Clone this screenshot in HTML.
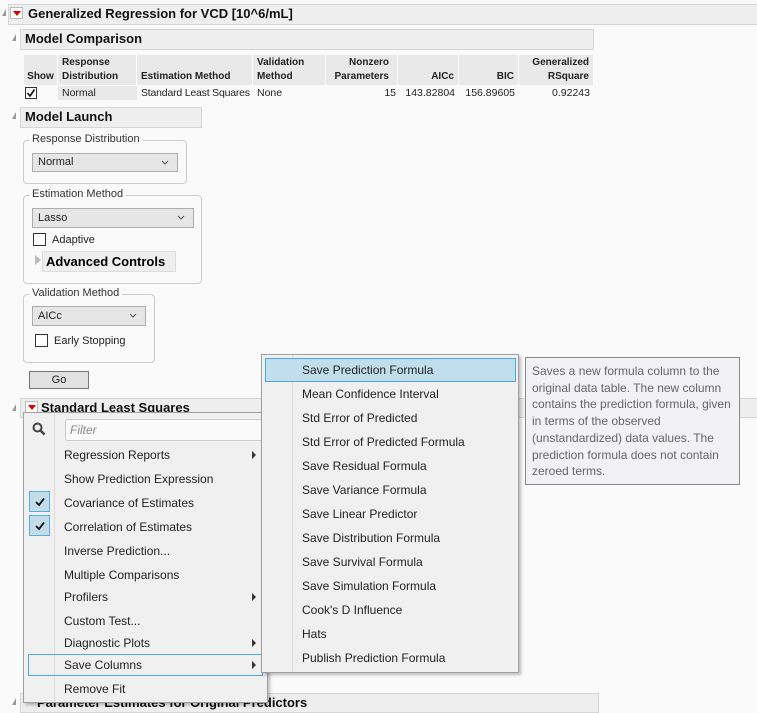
<!DOCTYPE html>
<html><head><style>
*{box-sizing:border-box;margin:0;padding:0}
body{width:757px;height:706px;background:#fafafa;position:relative;overflow:hidden;font-family:"Liberation Sans",sans-serif;font-size:11px;color:#222}
.a{position:absolute;white-space:nowrap}
.hdr{position:absolute;background:#eeeeee;border:1px solid #d6d6d6;font-weight:bold;font-size:13px;color:#111;padding-left:4px;line-height:18px}
.tri{position:absolute;width:0;height:0;border-left:4px solid transparent;border-bottom:7px solid #999}
.red{position:absolute;width:13px;height:12px;background:#fff;border:1px solid #bbb}
.red:after{content:"";position:absolute;left:2px;top:3px;border-left:4px solid transparent;border-right:4px solid transparent;border-top:5px solid #d00}
.th{position:absolute;top:55px;height:30px;background:#e9e9e9;font-weight:bold;font-size:10px;line-height:14px;padding-top:1px;border-right:1px solid #fff}
.td{position:absolute;top:86px;font-size:10.5px;line-height:14px}
.grp{position:absolute;border:1px solid #ccc;border-radius:4px}
.glab{position:absolute;background:#fafafa;padding:0 3px;font-size:11px;color:#333}
.dd{position:absolute;background:#e6e6e6;border:1px solid #adadad;font-size:11px;padding-left:5px}
.dd svg{position:absolute;right:8px;top:6px}
.cb{position:absolute;width:13px;height:13px;border:1px solid #333;background:#fff}
.menu{position:absolute;background:#f0f0f0;border:1px solid #a0a0a0;box-shadow:2px 2px 3px rgba(0,0,0,.25)}
.mi{position:absolute;font-size:12px;color:#222}
.arr{position:absolute;border-top:4px solid transparent;border-bottom:4px solid transparent;border-left:4px solid #333}
</style></head><body>
<div class="tri" style="left:2px;top:9px"></div>
<div class="hdr" style="left:8px;top:4px;width:760px;height:21px;padding-left:19px">Generalized Regression for VCD [10^6/mL]</div>
<div class="red" style="left:10px;top:7px"></div>
<div class="tri" style="left:12px;top:34px"></div>
<div class="hdr" style="left:20px;top:29px;width:574px;height:21px">Model Comparison</div>
<div class="th" style="left:24px;width:34px;padding-top:15px;text-align:center">Show</div>
<div class="th" style="left:58px;width:79px;padding-left:4px">Response<br>Distribution</div>
<div class="th" style="left:137px;width:116px;padding-left:4px;padding-top:15px">Estimation Method</div>
<div class="th" style="left:253px;width:73px;padding-left:4px">Validation<br>Method</div>
<div class="th" style="left:326px;width:72px;text-align:right;padding-right:8px">Nonzero<br>Parameters</div>
<div class="th" style="left:398px;width:61px;text-align:right;padding-right:4px;padding-top:15px">AICc</div>
<div class="th" style="left:459px;width:60px;text-align:right;padding-right:4px;padding-top:15px">BIC</div>
<div class="th" style="left:519px;width:75px;text-align:right;padding-right:4px">Generalized<br>RSquare</div>
<div class="cb" style="left:25px;top:87px;width:12px;height:12px"></div>
<svg class="a" style="left:26px;top:88px" width="10" height="10" viewBox="0 0 10 10"><path d="M1.5 5 L4 8 L8.5 1.5" fill="none" stroke="#111" stroke-width="1.6"/></svg>
<div class="td" style="left:58px;width:79px;height:14px;background:#e9e9e9;padding-left:4px">Normal</div>
<div class="td" style="left:141px;letter-spacing:-0.2px">Standard Least Squares</div>
<div class="td" style="left:257px">None</div>
<div class="td" style="left:326px;width:72px;text-align:right;padding-right:2px">15</div>
<div class="td" style="left:398px;width:61px;text-align:right;padding-right:4px">143.82804</div>
<div class="td" style="left:459px;width:60px;text-align:right;padding-right:4px">156.89605</div>
<div class="td" style="left:519px;width:75px;text-align:right;padding-right:4px">0.92243</div>
<div class="tri" style="left:12px;top:112px"></div>
<div class="hdr" style="left:20px;top:107px;width:182px;height:21px">Model Launch</div>
<div class="grp" style="left:23px;top:140px;width:164px;height:44px"></div>
<div class="glab" style="left:29px;top:133px">Response Distribution</div>
<div class="dd" style="left:32px;top:153px;width:146px;height:19px;line-height:17px">Normal<svg width="8" height="5"><path d="M1 1 L4 4 L7 1" fill="none" stroke="#555"/></svg></div>
<div class="grp" style="left:23px;top:195px;width:179px;height:89px"></div>
<div class="glab" style="left:29px;top:188px">Estimation Method</div>
<div class="dd" style="left:32px;top:208px;width:162px;height:20px;line-height:18px">Lasso<svg width="8" height="5"><path d="M1 1 L4 4 L7 1" fill="none" stroke="#555"/></svg></div>
<div class="cb" style="left:33px;top:233px"></div>
<div class="a" style="left:52px;top:234px">Adaptive</div>
<div class="a" style="left:35px;top:255px;border-top:5px solid transparent;border-bottom:5px solid transparent;border-left:6px solid #bbb"></div>
<div class="a" style="left:42px;top:251px;width:134px;height:21px;background:#eee;border:1px solid #ddd;font-weight:bold;font-size:13px;line-height:19px;padding-left:3px;color:#000">Advanced Controls</div>
<div class="grp" style="left:23px;top:294px;width:132px;height:69px"></div>
<div class="glab" style="left:29px;top:287px">Validation Method</div>
<div class="dd" style="left:32px;top:306px;width:114px;height:20px;line-height:18px">AICc<svg width="8" height="5"><path d="M1 1 L4 4 L7 1" fill="none" stroke="#555"/></svg></div>
<div class="cb" style="left:35px;top:334px"></div>
<div class="a" style="left:54px;top:335px">Early Stopping</div>
<div class="a" style="left:29px;top:371px;width:60px;height:18px;background:#e1e1e1;border:1px solid #777;text-align:center;line-height:16px">Go</div>
<div class="tri" style="left:12px;top:404px"></div>
<div class="hdr" style="left:20px;top:398px;width:740px;height:20px;padding-left:20px">Standard Least Squares</div>
<div class="red" style="left:25px;top:401px"></div>
<div class="tri" style="left:12px;top:698px"></div>
<div class="hdr" style="left:20px;top:693px;width:579px;height:20px;padding-left:16px">Parameter Estimates for Original Predictors</div>
<div class="menu" style="left:23px;top:412px;width:245px;height:291px">
 <div class="a" style="left:30px;top:0;width:1px;height:289px;background:#ddd"></div>
 <div class="a" style="left:41px;top:6px;width:198px;height:22px;background:#fafafa;border:1px solid #ccc;border-radius:3px;font-style:italic;color:#888;font-size:12px;padding-left:4px;line-height:20px">Filter</div>
 <svg class="a" style="left:8px;top:9px" width="14" height="14" viewBox="0 0 14 14"><circle cx="5.5" cy="5.5" r="4" fill="none" stroke="#444" stroke-width="2"/><path d="M8.5 8.5 L12.5 12.5" stroke="#444" stroke-width="2.5"/></svg>
 <div class="a" style="left:5px;top:78px;width:21px;height:21px;background:#c3dcea;border:1px solid #5aaedb"><svg style="position:absolute;left:5px;top:5px" width="10" height="10" viewBox="0 0 10 10"><path d="M1 5 L4 8 L9 1.5" fill="none" stroke="#111" stroke-width="1.8"/></svg></div>
 <div class="a" style="left:5px;top:102px;width:21px;height:21px;background:#c3dcea;border:1px solid #5aaedb"><svg style="position:absolute;left:5px;top:5px" width="10" height="10" viewBox="0 0 10 10"><path d="M1 5 L4 8 L9 1.5" fill="none" stroke="#111" stroke-width="1.8"/></svg></div>
 <div class="a" style="left:4px;top:241px;width:235px;height:22px;border:1px solid #4aa8dc"></div>
 <div class="mi" style="left:40px;top:35px">Regression Reports</div><div class="arr" style="left:228px;top:38px"></div>
 <div class="mi" style="left:40px;top:59px">Show Prediction Expression</div>
 <div class="mi" style="left:40px;top:83px">Covariance of Estimates</div>
 <div class="mi" style="left:40px;top:107px">Correlation of Estimates</div>
 <div class="mi" style="left:40px;top:131px">Inverse Prediction...</div>
 <div class="mi" style="left:40px;top:155px">Multiple Comparisons</div>
 <div class="mi" style="left:40px;top:177px">Profilers</div><div class="arr" style="left:228px;top:180px"></div>
 <div class="mi" style="left:40px;top:201px">Custom Test...</div>
 <div class="mi" style="left:40px;top:223px">Diagnostic Plots</div><div class="arr" style="left:228px;top:226px"></div>
 <div class="mi" style="left:40px;top:245px">Save Columns</div><div class="arr" style="left:228px;top:248px"></div>
 <div class="mi" style="left:40px;top:269px">Remove Fit</div>
</div>
<div class="menu" style="left:261px;top:354px;width:258px;height:319px">
 <div class="a" style="left:30px;top:0;width:1px;height:317px;background:#ddd"></div>
 <div class="a" style="left:3px;top:3px;width:251px;height:24px;background:#c0deec;border:1px solid #4aa8dc"></div>
 <div class="mi" style="left:40px;top:8px">Save Prediction Formula</div>
 <div class="mi" style="left:40px;top:32px">Mean Confidence Interval</div>
 <div class="mi" style="left:40px;top:56px">Std Error of Predicted</div>
 <div class="mi" style="left:40px;top:80px">Std Error of Predicted Formula</div>
 <div class="mi" style="left:40px;top:104px">Save Residual Formula</div>
 <div class="mi" style="left:40px;top:128px">Save Variance Formula</div>
 <div class="mi" style="left:40px;top:152px">Save Linear Predictor</div>
 <div class="mi" style="left:40px;top:176px">Save Distribution Formula</div>
 <div class="mi" style="left:40px;top:200px">Save Survival Formula</div>
 <div class="mi" style="left:40px;top:224px">Save Simulation Formula</div>
 <div class="mi" style="left:40px;top:248px">Cook's D Influence</div>
 <div class="mi" style="left:40px;top:272px">Hats</div>
 <div class="mi" style="left:40px;top:296px">Publish Prediction Formula</div>
</div>
<div class="a" style="left:525px;top:357px;width:215px;height:128px;background:#f2f2f6;border:1px solid #888;padding:5px 6px;font-size:12px;line-height:16.7px;color:#666;white-space:normal">Saves a new formula column to the original data table. The new column contains the prediction formula, given in terms of the observed (unstandardized) data values. The prediction formula does not contain zeroed terms.</div>
</body></html>
